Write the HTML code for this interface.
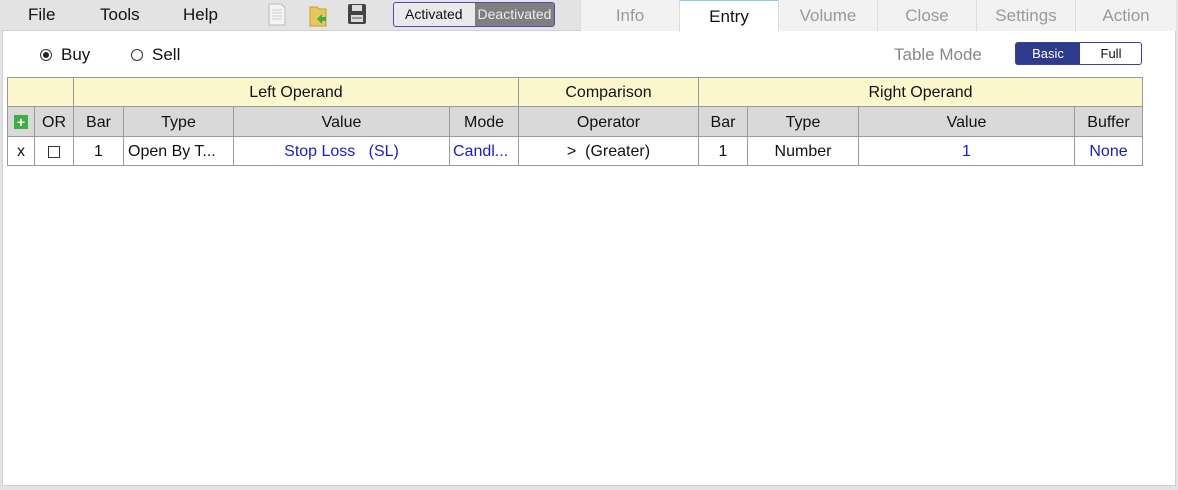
<!DOCTYPE html><html><head><style>
*{margin:0;padding:0;box-sizing:border-box}
body{width:1178px;height:490px;background:#e3e3e3;font-family:"Liberation Sans",sans-serif;position:relative;overflow:hidden;color:#111}
.a{position:absolute}
.panel{left:2px;top:30px;width:1174px;height:456px;background:#fff;border:1px solid #d0d0d0}
.menu{top:5px;font-size:17px}
.tab{top:0;height:31px;width:99px;background:#f2f2f2;border-left:1px solid #ddd;color:#999;font-size:17px;text-align:center;line-height:32px}
table{position:absolute;left:7px;top:77px;border-collapse:collapse;font-size:16px}
td{border:1px solid #9a9a9a;text-align:center;height:29px;padding:2px 0 0;white-space:nowrap;overflow:hidden}
.y td{background:#fdf7cd;height:29px}
.g td{background:#d9d9d9;height:30px}
.b{color:#1b1bd0}
</style></head><body>
<div class="a panel"></div>
<div class="a menu" style="left:28px">File</div>
<div class="a menu" style="left:100px">Tools</div>
<div class="a menu" style="left:183px">Help</div>
<svg class="a" style="left:267px;top:3px" width="20" height="23"><path d="M2 1h12l4 4v17H2z" fill="#f4f4f4" stroke="#bbb"/><path d="M5 7h10M5 10h10M5 13h10M5 16h10" stroke="#ccc"/></svg>
<svg class="a" style="left:309px;top:3px" width="20" height="24"><path d="M1 4h7l2 2h7v17H1z" fill="#e9c65a" stroke="#c89d2e"/><path d="M8 16l5-5v3h4v4h-4v3z" fill="#3cb043"/></svg>
<svg class="a" style="left:347px;top:3px" width="20" height="22"><rect x="1" y="1" width="18" height="20" rx="2" fill="#444"/><rect x="5" y="2" width="10" height="6" fill="#ddd"/><rect x="4" y="12" width="12" height="7" fill="#ddd"/><path d="M5 15h10" stroke="#555"/></svg>
<div class="a" style="left:393px;top:2px;width:162px;height:25px;border:1px solid #4b4fa8;border-radius:3px;background:#eaeaea;font-size:14px;line-height:23px">
<span style="position:absolute;left:11px">Activated</span>
<span style="position:absolute;left:81px;top:0;width:79px;height:23px;background:#7f7f7f;color:#eee;text-align:center">Deactivated</span></div>
<div class="a tab" style="left:580px">Info</div>
<div class="a tab" style="left:679px;background:#fff;color:#111;border-top:1px solid #8ccbe8;height:32px">Entry</div>
<div class="a tab" style="left:778px">Volume</div>
<div class="a tab" style="left:877px">Close</div>
<div class="a tab" style="left:976px">Settings</div>
<div class="a tab" style="left:1075px;width:101px">Action</div>
<div class="a" style="left:40px;top:45px;font-size:17px"><span style="display:inline-block;width:12px;height:12px;border:1px solid #333;border-radius:50%;position:relative;top:1px;margin-right:9px"><span style="position:absolute;left:2px;top:2px;width:6px;height:6px;border-radius:50%;background:#222"></span></span>Buy</div>
<div class="a" style="left:131px;top:45px;font-size:17px"><span style="display:inline-block;width:12px;height:12px;border:1px solid #333;border-radius:50%;position:relative;top:1px;margin-right:9px"></span>Sell</div>
<div class="a" style="left:894px;top:45px;font-size:17px;color:#888">Table Mode</div>
<div class="a" style="left:1015px;top:42px;width:127px;height:23px;border:1px solid #3a4299;border-radius:3px;background:#fff;font-size:13px;line-height:21px">
<span style="position:absolute;left:0;top:0;width:64px;height:21px;background:#2d3a8e;color:#fff;text-align:center">Basic</span>
<span style="position:absolute;left:64px;width:62px;text-align:center">Full</span></div>
<table>
<colgroup><col style="width:27px"><col style="width:39px"><col style="width:50px"><col style="width:110px"><col style="width:216px"><col style="width:69px"><col style="width:180px"><col style="width:49px"><col style="width:111px"><col style="width:216px"><col style="width:68px"></colgroup>
<tr class="y"><td colspan="2"></td><td colspan="4">Left Operand</td><td>Comparison</td><td colspan="4">Right Operand</td></tr>
<tr class="g"><td><span style="display:inline-block;width:14px;height:14px;background:#3cb043;color:#fff;font-weight:bold;font-size:14px;line-height:14px;vertical-align:middle">+</span></td><td>OR</td><td>Bar</td><td>Type</td><td>Value</td><td>Mode</td><td>Operator</td><td>Bar</td><td>Type</td><td>Value</td><td>Buffer</td></tr>
<tr><td>x</td><td><span style="display:inline-block;width:12px;height:12px;border:1px solid #333;vertical-align:middle"></span></td><td>1</td><td style="text-align:left;padding-left:4px">Open By T...</td><td class="b">Stop Loss &nbsp; (SL)</td><td class="b" style="text-align:left;padding-left:3px">Candl...</td><td>&gt; &nbsp;(Greater)</td><td>1</td><td>Number</td><td class="b">1</td><td class="b">None</td></tr>
</table>
</body></html>
